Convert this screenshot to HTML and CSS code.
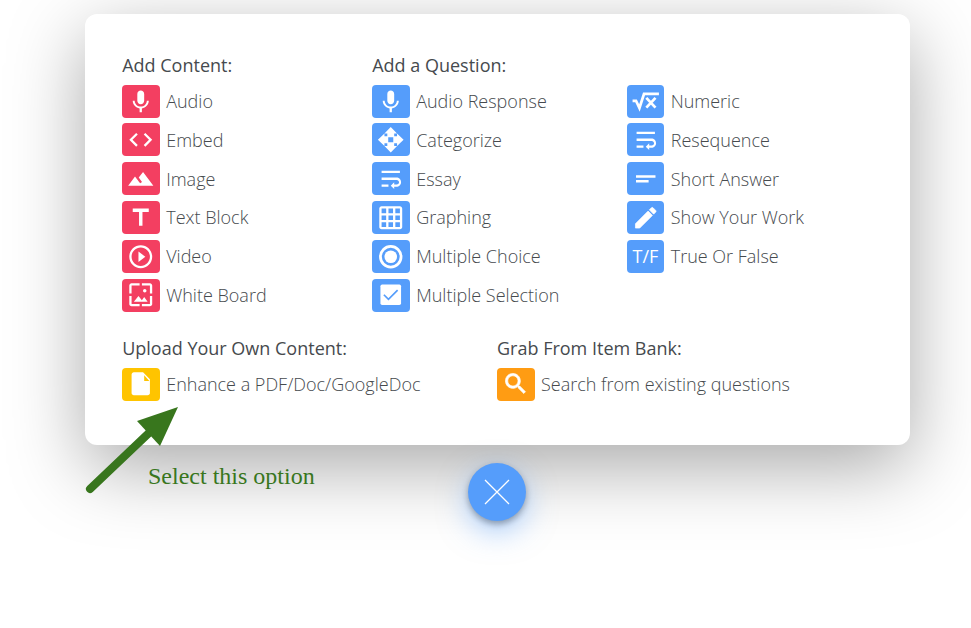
FILE: index.html
```html
<!DOCTYPE html>
<html lang="en">
<head>
    <meta charset="UTF-8">
    <meta name="viewport" content="width=device-width, initial-scale=1.0">
    <title>Add Content</title>
    <link rel="stylesheet" href="styles.css">
</head>
<body>
    <div class="container">
        <div class="card">
            <div class="top-row">
                <!-- Content -->
                <div class="content-col">
                    <div class="title">Add Content:</div>
                    <div class="items">
                        <div class="item"><span class="icon red"><svg viewBox="0 0 24 24"><path d="M12 15c1.66 0 2.99-1.34 2.99-3L15 6c0-1.66-1.34-3-3-3S9 4.34 9 6v6c0 1.66 1.34 3 3 3zm5.3-3c0 3-2.54 5.1-5.3 5.1S6.7 15 6.7 12H5c0 3.42 2.72 6.23 6 6.72V22h2v-3.28c3.28-.48 6-3.3 6-6.72h-1.7z"/></svg></span>Audio</div>
                        <div class="item"><span class="icon red"><svg viewBox="0 0 24 24"><path d="M9.4 16.6L4.8 12l4.6-4.6L8 6l-6 6 6 6 1.4-1.4zm5.2 0l4.6-4.6-4.6-4.6L16 6l6 6-6 6-1.4-1.4z"/></svg></span>Embed</div>
                        <div class="item"><span class="icon red"><svg viewBox="0 0 24 24"><path d="M14 6l-3.75 5 2.85 3.8-1.6 1.2C9.81 13.75 7 10 7 10l-6 8h22L14 6z"/></svg></span>Image</div>
                        <div class="item"><span class="icon red"><svg viewBox="0 0 24 24"><path d="M5 4v3h5.500v12h3V7H19V4z"/></svg></span>Text Block</div>
                        <div class="item"><span class="icon red"><svg viewBox="0 0 24 24"><path d="M10 16.500l6-4.500-6-4.500v9zM12 2C6.480 2 2 6.480 2 12s4.480 10 10 10 10-4.480 10-10S17.520 2 12 2zm0 18c-4.410 0-8-3.590-8-8s3.590-8 8-8 8 3.590 8 8-3.590 8-8 8z"/></svg></span>Video</div>
                        <div class="item"><span class="icon red"><svg viewBox="0 0 24 24"><path d="M4 4h7V2H4c-1.100 0-2 .9-2 2v7h2V4zm6 9l-4 5h12l-3-4-2.030 2.710L10 13zm7-4.500c0-.83-.67-1.500-1.500-1.500S14 7.670 14 8.500s.67 1.500 1.500 1.500S17 9.330 17 8.500zM20 2h-7v2h7v7h2V4c0-1.100-.9-2-2-2zm0 18h-7v2h7c1.100 0 2-.9 2-2v-7h-2v7zM4 13H2v7c0 1.100.9 2 2 2h7v-2H4v-7z"/></svg></span>White Board</div>
                    </div>
                </div>

                <!-- Questions -->
                <div class="question-col">
                    <div class="title">Add a Question:</div>
                    <div class="question-lists">
                        <div class="items">
                            <div class="item"><span class="icon blue"><svg viewBox="0 0 24 24"><path d="M12 15c1.66 0 2.99-1.34 2.99-3L15 6c0-1.66-1.34-3-3-3S9 4.34 9 6v6c0 1.66 1.34 3 3 3zm5.3-3c0 3-2.54 5.1-5.3 5.1S6.7 15 6.7 12H5c0 3.42 2.72 6.23 6 6.72V22h2v-3.28c3.28-.48 6-3.3 6-6.72h-1.7z"/></svg></span>Audio Response</div>
                            <div class="item"><span class="icon blue"><svg viewBox="0 0 24 24"><path fill-rule="evenodd" d="M12 .8l5.500 5.700H15V9h2.500V6.500l5.700 5.500-5.700 5.500V15H15v2.500h2.500L12 23.200l-5.500-5.700H9V15H6.500v2.500L.8 12l5.700-5.500V9H9V6.500H6.500zM9.800 9.800v4.400h4.400V9.800z"/></svg></span>Categorize</div>
                            <div class="item"><span class="icon blue"><svg viewBox="0 0 24 24"><path d="M4 19h6v-2H4v2zM20 5H4v2h16V5zm-3 6H4v2h13.250c1.100 0 2 .9 2 2s-.9 2-2 2H15v-2l-3 3 3 3v-2h2c2.210 0 4-1.790 4-4s-1.790-4-4-4z"/></svg></span>Essay</div>
                            <div class="item"><span class="icon blue"><svg viewBox="0 0 24 24"><path d="M20 2H4c-1.100 0-2 .9-2 2v16c0 1.100.9 2 2 2h16c1.100 0 2-.9 2-2V4c0-1.100-.9-2-2-2zM8 20H4v-4h4v4zm0-6H4v-4h4v4zm0-6H4V4h4v4zm6 12h-4v-4h4v4zm0-6h-4v-4h4v4zm0-6h-4V4h4v4zm6 12h-4v-4h4v4zm0-6h-4v-4h4v4zm0-6h-4V4h4v4z"/></svg></span>Graphing</div>
                            <div class="item"><span class="icon blue"><svg viewBox="0 0 24 24"><circle class="line" cx="12" cy="12" r="9"/><circle cx="12" cy="12" r="5.500"/></svg></span>Multiple Choice</div>
                            <div class="item"><span class="icon blue"><svg viewBox="0 0 24 24"><rect x="3" y="3" width="18" height="18" rx="1.500"/><path class="tick" d="M6 12l4 4 8-8"/></svg></span>Multiple Selection</div>
                        </div>
                        <div class="items">
                            <div class="item"><span class="icon blue"><svg viewBox="0 0 24 24"><path class="line" d="M.5 12H3.500l3 6.300L10.500 6H23.500"/><path class="line" d="M12.500 9.500l8 8.500M20.500 9.500l-8 8.500"/></svg></span>Numeric</div>
                            <div class="item"><span class="icon blue"><svg viewBox="0 0 24 24"><path d="M4 19h6v-2H4v2zM20 5H4v2h16V5zm-3 6H4v2h13.250c1.100 0 2 .9 2 2s-.9 2-2 2H15v-2l-3 3 3 3v-2h2c2.210 0 4-1.790 4-4s-1.790-4-4-4z"/></svg></span>Resequence</div>
                            <div class="item"><span class="icon blue"><svg viewBox="0 0 24 24"><path d="M3.500 9h17v2.200h-17zM3.500 13h11v2.200h-11z"/></svg></span>Short Answer</div>
                            <div class="item"><span class="icon blue"><svg viewBox="0 0 24 24"><path class="bold" d="M3 17.250V21h3.750L17.810 9.940l-3.750-3.750L3 17.250zM20.710 7.040c.39-.39.39-1.020 0-1.410l-2.340-2.340c-.39-.39-1.020-.39-1.410 0l-1.830 1.830 3.750 3.750 1.830-1.830z"/></svg></span>Show Your Work</div>
                            <div class="item"><span class="icon blue tf">T/F</span>True Or False</div>
                        </div>
                    </div>
                </div>
            </div>

            <div class="bottom-row">
                <div class="bottom-col">
                    <div class="title">Upload Your Own Content:</div>
                    <div class="item"><span class="icon yellow"><svg viewBox="0 0 24 24"><path d="M6 2c-1.100 0-1.990.9-1.990 2L4 20c0 1.100.89 2 1.990 2H18c1.100 0 2-.9 2-2V8l-6-6H6zm9 7.500V4.500L19.500 9.500H15z"/></svg></span>Enhance a PDF/Doc/GoogleDoc</div>
                </div>
                <div class="bottom-col">
                    <div class="title">Grab From Item Bank:</div>
                    <div class="item"><span class="icon orange"><svg viewBox="0 0 24 24"><path class="bold" d="M15.500 14h-.79l-.28-.27C15.410 12.590 16 11.110 16 9.500 16 5.910 13.090 3 9.500 3S3 5.910 3 9.500 5.910 16 9.500 16c1.610 0 3.090-.59 4.230-1.570l.27.28v.79l5 4.990L20.490 19l-4.990-5zm-6 0C7.010 14 5 11.990 5 9.500S7.010 5 9.500 5 14 7.010 14 9.500 11.990 14 9.500 14z"/></svg></span>Search from existing questions</div>
                </div>
            </div>
        </div>

        <button class="close" aria-label="Close">
            <svg viewBox="0 0 26 26"><path d="M1 1l24 24M25 1L1 25"/></svg>
        </button>

        <!-- Callout -->
        <svg class="arrow" viewBox="0 0 100 100">
            <path class="shaft" d="M10 89L71 31"/>
            <path class="head" d="M98 7L57 21l23 25z"/>
        </svg>
        <div class="note">Select this option</div>
    </div>
</body>
</html>
```

FILE: styles.css
```css
body {
    margin: 0;
    height: 628px;
    overflow: hidden;
    background-color: #fff;
    font-family: "Open Sans", sans-serif;
    font-size: 18px;
    color: #464a4e;
}
.container {
    position: relative;
    display: flex;
    flex-direction: column;
    align-items: center;
    width: 825px;
    margin-left: 84.5px;
    padding-top: 14px;
}
.card {
    box-sizing: border-box;
    width: 825px;
    height: 431px;
    padding: 38px 37.7px;
    background-color: #fff;
    border-radius: 12px;
    box-shadow: 0 22px 76px rgba(0, 0, 0, 0.34);
}
.top-row, .bottom-row, .question-lists {
    display: flex;
}
.content-col {
    flex: none;
    width: 250px;
}
.question-lists .items {
    flex: none;
    width: 254.5px;
}
.title {
    height: 32.6px;
    line-height: 27px;
}
.items {
    display: flex;
    flex-direction: column;
    gap: 5.8px;
}
.item {
    display: flex;
    align-items: center;
    height: 33px;
    line-height: 24px;
    font-weight: 300;
    white-space: nowrap;
}
.icon {
    display: flex;
    justify-content: center;
    align-items: center;
    width: 37.5px;
    height: 33px;
    margin-right: 6.5px;
    border-radius: 4px;
    color: #fff;
}
.icon svg {
    width: 27.5px;
    height: 27.5px;
    fill: #fff;
}
.icon .line {
    fill: none;
    stroke: #fff;
    stroke-width: 2.4;
}
.icon .tick {
    fill: none;
    stroke: #559dfb;
    stroke-width: 1.5;
}
.icon .bold {
    stroke: #fff;
    stroke-width: 0.6;
}
.red {
    background-color: #f33f61;
}
.blue {
    background-color: #559dfb;
}
.yellow {
    background-color: #ffc400;
}
.orange {
    background-color: #ff9c13;
}
.tf {
    font-weight: 400;
}
.bottom-row {
    margin-top: 23.4px;
}
.bottom-col {
    width: 375px;
}
.close {
    display: flex;
    justify-content: center;
    align-items: center;
    width: 58px;
    height: 58px;
    margin-top: 18px;
    padding: 0;
    border: none;
    border-radius: 50%;
    background-color: #559dfb;
    box-shadow: 0 3px 6px rgba(0, 0, 0, 0.3), 0 10px 30px rgba(85, 157, 251, 0.5);
    cursor: pointer;
}
.close svg {
    width: 26px;
    height: 26px;
    fill: none;
    stroke: #fff;
    stroke-width: 1.3;
}
.arrow {
    position: absolute;
    left: -4.5px;
    top: 400px;
    width: 100px;
    height: 100px;
}
.shaft {
    stroke: #38761d;
    stroke-width: 8;
    stroke-linecap: round;
}
.head {
    fill: #38761d;
}
.note {
    position: absolute;
    left: 63.5px;
    top: 462px;
    font-family: "Liberation Serif", serif;
    font-size: 24px;
    line-height: 28px;
    color: #38761d;
}
```
